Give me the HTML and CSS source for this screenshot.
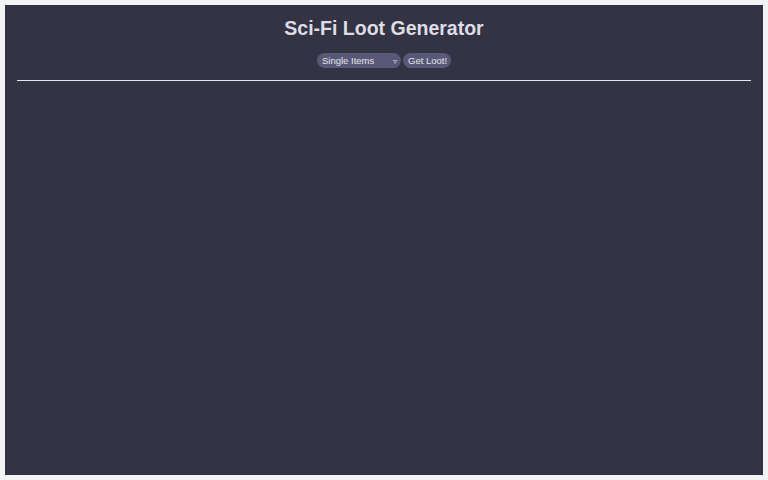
FILE: index.html
```html
<!DOCTYPE html>
<html lang="en">
<head>
    <meta charset="UTF-8">
    <meta name="viewport" content="width=device-width, initial-scale=1.0">
    <title>Sci-Fi Loot Generator</title>
    <link rel="stylesheet" href="styles.css">
</head>
<body>
    <div class="app">
        <h1>Sci-Fi Loot Generator</h1>

        <div class="controls">
            <div class="select-wrap">
                <select class="mode">
                    <option>Single Items</option>
                    <option>Loot Crate</option>
                    <option>Stash</option>
                </select>
                <span class="arrow">&#9663;</span>
            </div>
            <button class="get-loot">Get Loot!</button>
        </div>

        <hr class="divider">

        <div class="results"></div>
    </div>
</body>
</html>
```

FILE: styles.css
```css
* {
    box-sizing: border-box;
    margin: 0;
    padding: 0;
}

body {
    font-family: "Liberation Sans", Arial, sans-serif;
    background-color: #f3f3f6;
    padding: 5px;
}

.app {
    background-color: #343343;
    height: 470px;
    padding: 0 12px;
    color: #dcdce4;
}

h1 {
    text-align: center;
    font-size: 19.5px;
    padding-top: 12px;
    line-height: 23px;
    color: #dedde6;
}

.controls {
    display: flex;
    justify-content: center;
    align-items: center;
    gap: 2px;
    margin-top: 13px;
    height: 15px;
}

.select-wrap {
    position: relative;
    height: 15px;
}

.mode {
    appearance: none;
    -webkit-appearance: none;
    display: block;
    width: 84px;
    height: 15px;
    border: none;
    border-radius: 8px;
    background-color: #5a5877;
    color: #e4e4ee;
    font-family: inherit;
    font-size: 9.5px;
    padding: 0 5px;
    line-height: 15px;
}

.arrow {
    position: absolute;
    right: 4px;
    top: 5px;
    font-size: 8px;
    line-height: 8px;
    color: #d8d8e6;
    pointer-events: none;
}

.get-loot {
    display: block;
    height: 15px;
    border: none;
    border-radius: 8px;
    background-color: #5a5877;
    color: #e4e4ee;
    font-family: inherit;
    font-size: 9.5px;
    line-height: 15px;
    padding: 0 5px;
    white-space: nowrap;
    width: 48px;
}

.divider {
    border: none;
    border-top: 1px solid #e6e6ee;
    margin-top: 12px;
}
```
